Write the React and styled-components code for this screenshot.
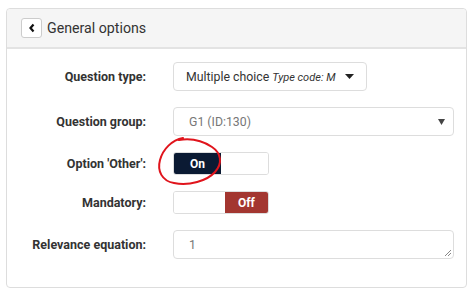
import React from 'react';
import styled, { createGlobalStyle } from 'styled-components';

const GlobalStyle = createGlobalStyle`
  body {
    margin: 0;
    background: #fff;
    font-family: Roboto, "Liberation Sans", Arial, sans-serif;
    color: #333;
  }
`;

const Panel = styled.div`
  position: relative;
  margin: 8px 7px 0 6px;
  height: 280px;
  box-sizing: border-box;
  border: 1px solid #ddd;
  border-radius: 4px;
  background: #fff;
`;

const Header = styled.div`
  display: flex;
  align-items: center;
  gap: 5px;
  height: 40px;
  box-sizing: border-box;
  padding-left: 14px;
  background: #f5f5f5;
  border-bottom: 2px solid #e3e3e3;
  border-radius: 4px 4px 0 0;
`;

const BackButton = styled.button`
  display: flex;
  align-items: center;
  justify-content: center;
  width: 21px;
  height: 20px;
  padding: 0;
  background: #fff;
  border: 1px solid #ccc;
  border-radius: 3px;
`;

const Title = styled.span`
  font-size: 14.2px;
  color: #333;
`;

const Body = styled.div`
  padding: 13px 12px 0 0;
  display: flex;
  flex-direction: column;
  gap: 16px;
`;

const Row = styled.div`
  display: flex;
  align-items: center;
`;

const Label = styled.label`
  width: 139px;
  flex: none;
  text-align: right;
  font-size: 12.5px;
  font-weight: 700;
  color: #333;
  margin-right: 27px;
`;

const Select = styled.div`
  display: flex;
  align-items: center;
  justify-content: space-between;
  box-sizing: border-box;
  width: ${p => p.$width || 'auto'};
  flex: ${p => (p.$width ? 'none' : '1')};
  height: 29px;
  padding: 0 ${p => p.$padRight || 10}px 0 ${p => p.$padLeft || 12}px;
  border: 1px solid #ddd;
  border-radius: 4px;
  background: #fff;
  font-size: 12.3px;
  color: ${p => p.$muted ? '#777' : '#333'};
`;

const TypeCode = styled.i`
  font-size: 11px;
  margin-left: 3px;
`;

const Toggle = styled.div`
  display: flex;
  width: 96px;
  height: 23px;
  box-sizing: border-box;
  border: 1px solid #ddd;
  border-radius: 3px;
  overflow: hidden;
`;

const Segment = styled.div`
  width: ${p => p.$w}px;
  display: flex;
  align-items: center;
  justify-content: center;
  background: ${p => p.$bg || '#fff'};
  color: #fff;
  font-size: 12px;
  font-weight: 700;
`;

const TextArea = styled.div`
  position: relative;
  flex: 1;
  height: 29px;
  box-sizing: border-box;
  padding: 0 15px;
  display: flex;
  align-items: center;
  border: 1px solid #ddd;
  border-radius: 4px;
  font-size: 12.3px;
  color: #777;
`;

const Grip = styled.svg`
  position: absolute;
  right: 1px;
  bottom: 1px;
`;

const Scribble = styled.svg`
  position: absolute;
  left: 0;
  top: 0;
  pointer-events: none;
`;

export default function App() {
  return (
    <>
      <GlobalStyle />
      <Panel>
        <Header>
          <BackButton>
            <svg width="8" height="10" viewBox="0 0 8 10">
              <path d="M5.5 1.5 L2.5 5 L5.5 8.5" fill="none" stroke="#111" strokeWidth="2.2" />
            </svg>
          </BackButton>
          <Title>General options</Title>
        </Header>
        <Body>
          <Row>
            <Label>Question type:</Label>
            <Select $width="194px" $padRight={12}>
              <span>
                Multiple choice<TypeCode>Type code: M</TypeCode>
              </span>
              <svg width="9" height="5" viewBox="0 0 9 5">
                <path d="M0 0 H9 L4.5 5 Z" fill="#222" />
              </svg>
            </Select>
          </Row>
          <Row>
            <Label>Question group:</Label>
            <Select $muted $padLeft={15} $padRight={8}>
              <span>G1 (ID:130)</span>
              <svg width="7" height="6" viewBox="0 0 7 6">
                <path d="M0 0 H7 L3.5 6 Z" fill="#444" />
              </svg>
            </Select>
          </Row>
          <Row>
            <Label>Option 'Other':</Label>
            <Toggle>
              <Segment $w={48} $bg="#0b1a33">On</Segment>
              <Segment $w={48} />
            </Toggle>
          </Row>
          <Row>
            <Label>Mandatory:</Label>
            <Toggle>
              <Segment $w={52} />
              <Segment $w={44} $bg="#a33630">Off</Segment>
            </Toggle>
          </Row>
          <Row>
            <Label>Relevance equation:</Label>
            <TextArea>
              1
              <Grip width="8" height="8" viewBox="0 0 8 8">
                <path d="M7 1 L1 7 M7 4 L4 7" stroke="#888" strokeWidth="1" />
              </Grip>
            </TextArea>
          </Row>
        </Body>
        <Scribble width="462" height="280" viewBox="0 0 462 280">
          <path
            d="M176 129 C165 131 156 140 153 151 C150 162 155 172 167 174 C182 177 200 172 208 163 C216 154 214 144 205 138 C196 132 184 129 172 131"
            fill="none"
            stroke="#e0141c"
            strokeWidth="2"
            strokeLinecap="round"
          />
        </Scribble>
      </Panel>
    </>
  );
}
